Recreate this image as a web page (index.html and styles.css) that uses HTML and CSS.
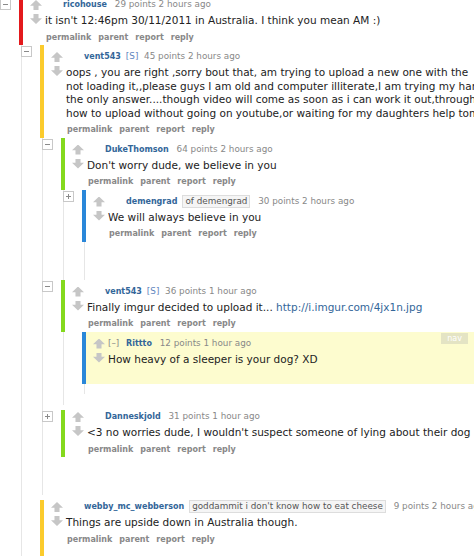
FILE: index.html
```html
<!DOCTYPE html>
<html lang="en">
<head>
  <meta charset="UTF-8">
  <title>comments</title>
  <link rel="stylesheet" href="styles.css">
</head>
<body>

<div class="commentarea">

  <div class="comment c-red late">
    <div class="entry">
      <span class="collapse"></span>
      <div class="main">
        <div class="arrows"><span class="arrow up"></span><span class="arrow down"></span></div>
        <div class="content">
          <p class="tagline"><span class="expand"></span><a class="author">ricohouse</a> 29 points 2 hours ago</p>
          <div class="md"><p>it isn't 12:46pm 30/11/2011 in Australia. I think you mean AM :)</p></div>
          <ul class="buttons"><li>permalink</li><li>parent</li><li>report</li><li>reply</li></ul>
        </div>
      </div>
    </div>
    <div class="child">

      <div class="comment c-yellow">
        <div class="entry">
          <span class="collapse"></span>
          <div class="main">
            <div class="arrows"><span class="arrow up"></span><span class="arrow down"></span></div>
            <div class="content">
              <p class="tagline"><span class="expand"></span><a class="author">vent543</a><span class="submitter">[S]</span> 45 points 2 hours ago</p>
              <div class="md">
                <p>oops , you are right ,sorry bout that, am trying to upload a new one with the</p>
                <p>not loading it,,please guys I am old and computer illiterate,I am trying my hard</p>
                <p>the only answer....though video will come as soon as i can work it out,through</p>
                <p>how to upload without going on youtube,or waiting for my daughters help tomorrow</p>
              </div>
              <ul class="buttons"><li>permalink</li><li>parent</li><li>report</li><li>reply</li></ul>
            </div>
          </div>
        </div>
        <div class="child">

          <div class="comment c-green">
            <div class="entry">
              <span class="collapse"></span>
              <div class="main">
                <div class="arrows"><span class="arrow up"></span><span class="arrow down"></span></div>
                <div class="content">
                  <p class="tagline"><span class="expand"></span><a class="author">DukeThomson</a> 64 points 2 hours ago</p>
                  <div class="md"><p>Don't worry dude, we believe in you</p></div>
                  <ul class="buttons"><li>permalink</li><li>parent</li><li>report</li><li>reply</li></ul>
                </div>
              </div>
            </div>
            <div class="child">

              <div class="comment c-blue">
                <div class="entry">
                  <span class="collapse plus"></span>
                  <div class="main">
                    <div class="arrows"><span class="arrow up"></span><span class="arrow down"></span></div>
                    <div class="content">
                      <p class="tagline"><span class="expand"></span><a class="author">demengrad</a><span class="flair">of demengrad</span> 30 points 2 hours ago</p>
                      <div class="md"><p>We will always believe in you</p></div>
                      <ul class="buttons"><li>permalink</li><li>parent</li><li>report</li><li>reply</li></ul>
                    </div>
                  </div>
                </div>
                <div class="child gap-lg"></div>
              </div>

            </div>
          </div>

          <div class="comment c-green">
            <div class="entry">
              <span class="collapse"></span>
              <div class="main">
                <div class="arrows"><span class="arrow up"></span><span class="arrow down"></span></div>
                <div class="content">
                  <p class="tagline"><span class="expand"></span><a class="author">vent543</a><span class="submitter">[S]</span> 36 points 1 hour ago</p>
                  <div class="md"><p>Finally imgur decided to upload it... <a href="#">http://i.imgur.com/4jx1n.jpg</a></p></div>
                  <ul class="buttons"><li>permalink</li><li>parent</li><li>report</li><li>reply</li></ul>
                </div>
              </div>
            </div>
            <div class="child padded">

              <div class="comment c-blue target">
                <div class="entry">
                  <span class="collapse none"></span>
                  <div class="main">
                    <div class="arrows"><span class="arrow up"></span><span class="arrow down"></span></div>
                    <div class="content">
                      <p class="tagline"><span class="expand">[–]</span><a class="author">Rittto</a> 12 points 1 hour ago</p>
                      <div class="md"><p>How heavy of a sleeper is your dog? XD</p></div>
                    </div>
                    <span class="nav">nav</span>
                  </div>
                </div>
                <div class="child gap-sm"></div>
              </div>

            </div>
          </div>

          <div class="comment c-green late spaced">
            <div class="entry">
              <span class="collapse plus"></span>
              <div class="main">
                <div class="arrows"><span class="arrow up"></span><span class="arrow down"></span></div>
                <div class="content">
                  <p class="tagline"><span class="expand"></span><a class="author">Danneskjold</a> 31 points 1 hour ago</p>
                  <div class="md"><p>&lt;3 no worries dude, I wouldn't suspect someone of lying about their dog</p></div>
                  <ul class="buttons"><li>permalink</li><li>parent</li><li>report</li><li>reply</li></ul>
                </div>
              </div>
            </div>
          </div>

        </div>
      </div>

      <div class="comment c-yellow late last">
        <div class="entry">
          <span class="collapse none"></span>
          <div class="main">
            <div class="arrows"><span class="arrow up"></span><span class="arrow down"></span></div>
            <div class="content">
              <p class="tagline"><span class="expand"></span><a class="author">webby_mc_webberson</a><span class="flair">goddammit i don't know how to eat cheese</span> 9 points 2 hours ago</p>
              <div class="md"><p>Things are upside down in Australia though.</p></div>
              <ul class="buttons"><li>permalink</li><li>parent</li><li>report</li><li>reply</li></ul>
            </div>
          </div>
        </div>
      </div>

    </div>
  </div>

</div>

</body>
</html>
```

FILE: styles.css
```css
html, body {
  margin: 0;
  overflow: hidden;
  background: #fff;
}

body {
  font-family: "DejaVu Sans", Verdana, sans-serif;
  color: #222;
  width: 474px;
}

.commentarea {
  margin-top: -7px;
}

.entry {
  display: flex;
}

/* little [-] / [+] box left of each thread bar */
.collapse {
  flex: none;
  position: relative;
  width: 11px;
  height: 11px;
  margin: 1px 8px 0 0;
  box-sizing: border-box;
  border: 1px solid #c8c8c8;
  background: #fff;
}

.collapse::before {
  content: "";
  position: absolute;
  left: 2px;
  right: 2px;
  top: 4px;
  height: 1px;
  background: #8a8a8a;
}

.collapse.plus::after {
  content: "";
  position: absolute;
  top: 2px;
  bottom: 2px;
  left: 4px;
  width: 1px;
  background: #8a8a8a;
}

.collapse.none {
  border-color: transparent;
  background: none;
}

.collapse.none::before {
  display: none;
}

.main {
  flex: 1;
  min-width: 0;
  display: flex;
  position: relative;
  border-left: 4px solid #ccc;
  padding-left: 7px;
}

.c-red > .entry .main { border-left-color: #e3191c; }
.c-yellow > .entry .main { border-left-color: #fbcb2d; }
.c-green > .entry .main { border-left-color: #84d91d; }
.c-blue > .entry .main { border-left-color: #2a87d9; }

.target > .entry .main {
  background: #fdfccf;
}

.arrows {
  flex: none;
  width: 12px;
  padding-top: 7px;
  margin-right: 3px;
}

.arrow {
  display: block;
  width: 12px;
  height: 10px;
  background: #c6c6c6;
}

.arrow.up {
  clip-path: polygon(50% 0, 100% 58%, 71% 58%, 71% 100%, 29% 100%, 29% 58%, 0 58%);
}

.arrow.down {
  margin-top: 4px;
  clip-path: polygon(29% 0, 71% 0, 71% 42%, 100% 42%, 50% 100%, 0 42%, 29% 42%);
}

.content {
  flex: 1;
  min-width: 0;
  padding: 5px 0 1.5px;
}

/* comments that follow a gap: bar and box start a bit lower */
.late {
  padding-top: 5px;
}

.late > .entry .content {
  padding-top: 0;
}

.late > .entry .arrows {
  padding-top: 2px;
}

.target .content {
  padding-bottom: 18px;
}

.last .content {
  padding-bottom: 14px;
}

.tagline {
  margin: 0;
  font-size: 8.8px;
  line-height: 13px;
  color: #888;
  white-space: nowrap;
}

.expand {
  display: inline-block;
  width: 18px;
  color: #888;
}

.author {
  font-size: 8px;
  font-weight: bold;
  color: #369;
  margin-right: 5px;
}

.submitter {
  color: #5f86c0;
  margin-right: 3px;
}

.flair {
  display: inline-block;
  padding: 0 2px;
  border: 1px solid #ddd;
  background: #f5f5f5;
  color: #555;
  line-height: 11px;
  margin-right: 5px;
}

.md {
  margin-top: 3px;
  font-size: 10.5px;
  line-height: 13.5px;
  white-space: nowrap;
}

.md p {
  margin: 0;
}

.md a {
  color: #369;
  text-decoration: none;
}

.buttons {
  display: flex;
  gap: 7px;
  list-style: none;
  margin: 4px 0 0;
  padding: 0 0 0 1px;
  font-size: 8px;
  font-weight: bold;
  line-height: 12px;
  color: #888;
}

.nav {
  position: absolute;
  top: 1px;
  right: 6px;
  padding: 0 6px;
  background: #e4e4c4;
  color: #fff;
  font-size: 8px;
  line-height: 11px;
}

/* thread line sits on the left edge, under the children's boxes */
.child {
  margin-left: 21px;
  box-shadow: inset 1px 0 0 #e6e6e6;
}

.child.gap-lg {
  height: 38px;
}

.child.gap-sm {
  height: 10px;
}

.child.padded {
  padding-bottom: 11px;
}

.spaced {
  padding-bottom: 38px;
}
```
